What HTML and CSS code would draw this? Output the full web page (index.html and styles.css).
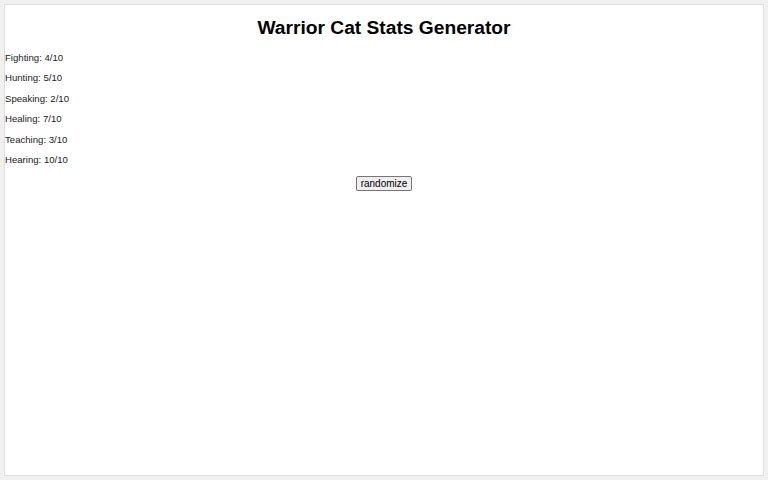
FILE: index.html
```html
<!DOCTYPE html>
<html lang="en">
<head>
    <meta charset="UTF-8">
    <meta name="viewport" content="width=device-width, initial-scale=1.0">
    <title>Warrior Cat Stats Generator</title>
    <link rel="stylesheet" href="styles.css">
</head>
<body>
    <div class="container">
        <h1>Warrior Cat Stats Generator</h1>
        <div id="stats">
            <p>Fighting: <span id="fighting">4</span>/10</p>
            <p>Hunting: <span id="hunting">5</span>/10</p>
            <p>Speaking: <span id="speaking">2</span>/10</p>
            <p>Healing: <span id="healing">7</span>/10</p>
            <p>Teaching: <span id="teaching">3</span>/10</p>
            <p>Hearing: <span id="hearing">10</span>/10</p>
        </div>
        <div id="randombutton"><button>randomize</button></div>
    </div>

    <script>
        let statNames = ["fighting", "hunting", "speaking", "healing", "teaching", "hearing"];
        document.querySelector("#randombutton button").addEventListener("click", randomize);

        function randomize() {
            // every stat gets a new number 1-10
            statNames.forEach(name => {
                let value = Math.floor(Math.random() * 10) + 1;
                document.getElementById(name).innerText = value;
            });
        }
    </script>
</body>
</html>
```
FILE: styles.css
```css
body {font-family: "Liberation Sans", Arial, sans-serif; color: #000000; background-color: #f0f0f0; margin: 4px;}
.container {background-color: #ffffff; border: 1px solid #dddddd; height: 472px; box-sizing: border-box; overflow: hidden;}
h1 {font-size: 19.2px; text-align: center; margin: 12px 0 12px;}
#stats p {font-size: 9.6px; line-height: 13px; margin: 7.4px 0; color: #222222;}
#randombutton {text-align: center; margin-top: 3.8px;}
button {font-family: "Liberation Sans", Arial, sans-serif; font-size: 10px; padding: 1px 4px; background: #efefef; border: 1px solid #767676; border-radius: 2px;}
```
